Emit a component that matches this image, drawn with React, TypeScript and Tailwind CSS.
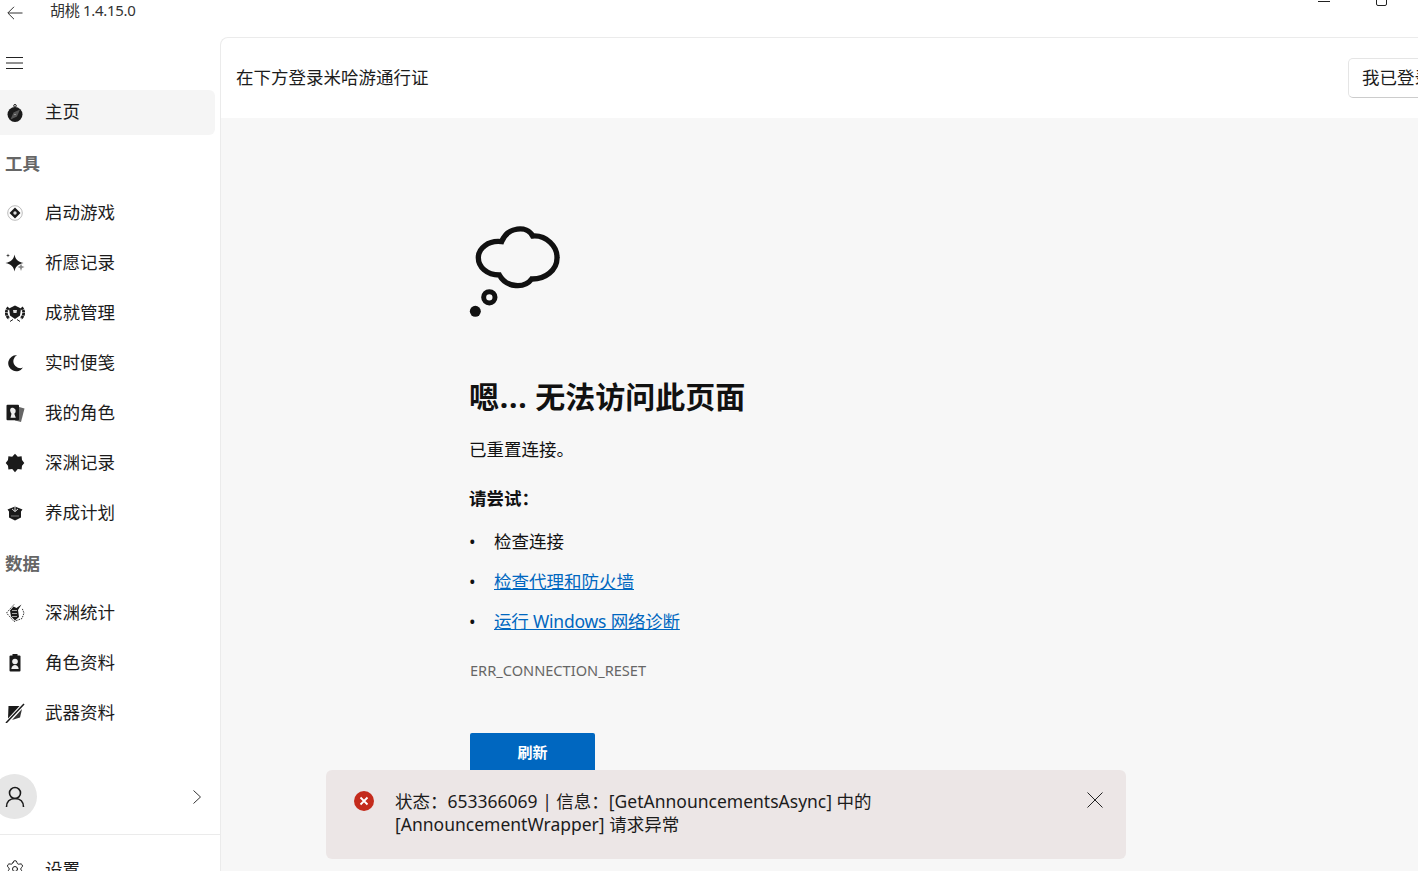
import type { ReactNode } from "react";
import { Settings } from "lucide-react";

const Compass = () => (
  <svg viewBox="0 0 20 20" className="w-5 h-5">
    <circle cx="10" cy="11.500" r="7.500" fill="#1a1a1a" />
    <path d="M15 6.500l-3 7-6.500 3 3-7z" fill="#555" />
    <path d="M10.500 11l-1 1" stroke="#ccc" strokeWidth="1" />
    <circle cx="10" cy="2.800" r="1.300" fill="none" stroke="#1a1a1a" strokeWidth="1" />
  </svg>
);

const Launch = () => (
  <svg viewBox="0 0 20 20" className="w-5 h-5">
    <circle cx="10" cy="10" r="7.300" fill="none" stroke="#bbb" strokeWidth="1" />
    <path d="M10 4.500l5.500 5.500-5.500 5.500L4.500 10z" fill="#1a1a1a" />
    <circle cx="10" cy="10" r="1.700" fill="#ddd" />
  </svg>
);

const Wish = () => (
  <svg viewBox="0 0 20 20" className="w-5 h-5">
    <path d="M16 10.500l1 2.500 2.500 1-2.500 1-1 3-1-3-2.500-1 2.500-1z" fill="#888" />
    <path d="M9.500 1.500c1 5 3 7 9 8.500-6 1.500-8 3.500-9 8.500-1-5-3-7-9-8.500 6-1.500 8-3.500 9-8.500z" fill="#1a1a1a" />
    <path d="M3 .5l.5 1.500L5 2.500l-1.500.5L3 4.500 2.500 3 1 2.500 2.500 2z" fill="#333" />
  </svg>
);

const Achievement = () => (
  <svg viewBox="0 0 20 20" className="w-5 h-5">
    <path d="M4 5.500L10 2.500l6 3-1 7-5 3.500-5-3.500z" fill="#1a1a1a" />
    <path d="M8 7h4l-.5 3h-3z" fill="#ddd" />
    <path d="M3.500 4.500C.5 8 .5 12 4 15.500M16.500 4.500c3 3.500 3 7.500-.5 11" fill="none" stroke="#1a1a1a" strokeWidth="2.800" strokeDasharray="2.600 .4" />
    <path d="M5 18.500l3-2M15 18.500l-3-2" stroke="#222" strokeWidth="1" />
  </svg>
);

const Moon = () => (
  <svg viewBox="0 0 20 20" className="w-5 h-5">
    <path d="M12 2.300A8 8 0 1 0 18 14.500 6.800 6.800 0 0 1 12 2.300z" fill="#1a1a1a" />
  </svg>
);

const Cards = () => (
  <svg viewBox="0 0 20 20" className="w-5 h-5">
    <path d="M12.500 3.500l7 2-3.500 13.500-6-1.500z" fill="#666" />
    <rect x="1.500" y="1.800" width="12.500" height="15.500" rx="1" fill="#1a1a1a" />
    <path d="M7 4.800c3 0 4.500 2.500 3.300 5l-1 1 1.500 4H5.500l1-4C4.800 8.500 4.500 5 7 4.800z" fill="#eee" />
  </svg>
);

const Abyss = () => (
  <svg viewBox="0 0 20 20" className="w-5 h-5">
    <path d="M10 .8l2.800 3 3.800-.6.400 3.800 2.300 3-2.300 2.700-.4 3.800-3.800-.6L10 19.200l-2.800-3.300-3.800.6-.4-3.800L.7 10l2.300-3 .4-3.800 3.800.6z" fill="#1a1a1a" />
  </svg>
);

const Cultivate = () => (
  <svg viewBox="0 0 20 20" className="w-5 h-5">
    <path d="M10 3.500l7.500 3-1.500 2v6l-6 3-6-3v-6l-1.500-2z" fill="#1a1a1a" />
    <path d="M10 2.500v6M7 6l3 2.500L13 6" fill="none" stroke="#ddd" strokeWidth="1" />
    <path d="M6 13h8" stroke="#777" strokeWidth="1" />
  </svg>
);

const AbyssStats = () => (
  <svg viewBox="0 0 20 20" className="w-5 h-5">
    <path d="M9 1.500L1.500 10 9 18.500l8-3 2-5.500-2-5" fill="none" stroke="#333" strokeWidth="1" strokeDasharray="1.500 1" />
    <path d="M16.500 1.500L13 7l1 7-4 3.500-4-4-1-6 3.500-4 3 1.500z" fill="#1a1a1a" />
    <path d="M7 7.500h5M7 10.500h5M7 13.500h5" stroke="#ccc" strokeWidth=".8" />
  </svg>
);

const Badge = () => (
  <svg viewBox="0 0 20 20" className="w-5 h-5">
    <rect x="4.500" y="2.500" width="11" height="16" rx="1" fill="#1a1a1a" />
    <rect x="7.500" y="1" width="5" height="2.500" fill="#1a1a1a" />
    <circle cx="10" cy="8.500" r="2.800" fill="#eee" />
    <path d="M6.300 16c.5-3 2-4 3.700-4s3.200 1 3.700 4z" fill="#eee" />
  </svg>
);

const Weapon = () => (
  <svg viewBox="0 0 20 20" className="w-5 h-5">
    <path d="M3.500 3h11L3 15.500z" fill="#1a1a1a" />
    <path d="M19 1L1 20" stroke="#1a1a1a" strokeWidth="1.500" />
    <path d="M17 6L7 17l8-2.500z" fill="#333" />
  </svg>
);

const NavItem = ({ icon, label }: { icon: ReactNode; label: string }) => (
  <div className="flex h-[50px] shrink-0 items-center gap-5 pl-[5px] text-[17.500px] text-[#1c1c1c]">
    {icon}
    <span className="pb-[2px]">{label}</span>
  </div>
);

const SectionLabel = ({ label }: { label: string }) => (
  <div className="flex h-[50px] shrink-0 items-center pl-[5px] text-[17.500px] font-bold text-[#666]">{label}</div>
);

const tools = [
  { icon: <Launch />, label: "启动游戏" },
  { icon: <Wish />, label: "祈愿记录" },
  { icon: <Achievement />, label: "成就管理" },
  { icon: <Moon />, label: "实时便笺" },
  { icon: <Cards />, label: "我的角色" },
  { icon: <Abyss />, label: "深渊记录" },
  { icon: <Cultivate />, label: "养成计划" },
];

const data = [
  { icon: <AbyssStats />, label: "深渊统计" },
  { icon: <Badge />, label: "角色资料" },
  { icon: <Weapon />, label: "武器资料" },
];

const Sidebar = () => (
  <aside className="flex w-[220px] shrink-0 flex-col">
    <div className="mt-px flex h-[50px] shrink-0 items-center pl-[5px]">
      <svg viewBox="0 0 20 14" className="h-[14px] w-5" fill="none" stroke="#222" strokeWidth="1">
        <path d="M1 1.500h17M1 7h17M1 12.500h17" />
      </svg>
    </div>
    <div className="mt-[2px] mr-[5px] flex h-[45px] shrink-0 items-center gap-5 rounded-r-md bg-[#f5f5f5] pl-[5px] text-[17.500px] text-[#1c1c1c]">
      <Compass />
      <span className="pb-[2px]">主页</span>
    </div>
    <div className="mt-[3px]">
      <SectionLabel label="工具" />
      {tools.map((t) => (
        <NavItem key={t.label} icon={t.icon} label={t.label} />
      ))}
      <SectionLabel label="数据" />
      {data.map((t) => (
        <NavItem key={t.label} icon={t.icon} label={t.label} />
      ))}
    </div>
    <div className="mt-9 flex h-[45px] shrink-0 items-center justify-between pr-[18px]">
      <div className="ml-[-8px] flex h-[45px] w-[45px] items-center justify-center rounded-full bg-[#e6e6e6]">
        <svg viewBox="0 0 24 24" className="h-6 w-6" fill="none" stroke="#1a1a1a" strokeWidth="1.600">
          <circle cx="12" cy="8" r="5.500" />
          <path d="M3.500 22c0-5 3-8.500 8.500-8.500s8.500 3.500 8.500 8.500" />
        </svg>
      </div>
      <svg viewBox="0 0 10 16" className="h-4 w-[10px]" fill="none" stroke="#333" strokeWidth="1">
        <path d="M1.500 1.500L8.500 8l-7 6.500" />
      </svg>
    </div>
    <div className="mt-[15px] flex h-[50px] shrink-0 items-center gap-5 border-t border-[#ebebeb] pl-[5px] pt-[19px] text-[17.500px] text-[#1c1c1c]">
      <Settings className="h-5 w-5" strokeWidth={1.200} />
      <span>设置</span>
    </div>
  </aside>
);

const ErrorPage = () => (
  <div className="flex flex-1 flex-col bg-[#f7f7f7] pl-[248px] pt-[107px] text-[#111]">
    <svg viewBox="60 45 270 270" className="ml-px h-[90px] w-[90px] overflow-visible">
      <path
        d="M155 95C172 50 232 45 248 78C290 75 322 110 321 143C322 180 285 208 245 207C225 235 170 235 148 195C110 195 85 170 85 143C85 115 115 90 155 95Z"
        fill="none"
        stroke="#111"
        strokeWidth="16"
      />
      <circle cx="118" cy="262" r="17" fill="none" stroke="#111" strokeWidth="15" />
      <circle cx="76" cy="304" r="16.500" fill="#111" />
    </svg>
    <h1 className="mt-[62px] text-[30px] font-bold leading-[40px]">
      <span className="tracking-[0.8px]">嗯...</span> 无法访问此页面
    </h1>
    <p className="mt-[20px] text-[17.500px] leading-6">已重置连接。</p>
    <p className="mt-[25px] text-[17.500px] font-bold leading-6">请尝试：</p>
    <ul className="mt-[19px] flex flex-col gap-4 text-[17.500px] leading-6">
      <li className="flex">
        <span className="w-[25px]">•</span>
        <span>检查连接</span>
      </li>
      <li className="flex">
        <span className="w-[25px]">•</span>
        <span className="text-[#0067c0] underline">检查代理和防火墙</span>
      </li>
      <li className="flex">
        <span className="w-[25px]">•</span>
        <span className="text-[#0067c0] underline tracking-[-0.2px]">运行 Windows 网络诊断</span>
      </li>
    </ul>
    <p className="ml-px mt-[27px] text-[14.600px] leading-5 text-[#666]">ERR_CONNECTION_RESET</p>
    <button className="ml-px mt-[53px] flex h-[50px] w-[125px] shrink-0 items-start justify-center rounded-[2px] bg-[#0067c0] pt-[8px] text-[15px] font-bold text-white">
      刷新
    </button>
  </div>
);

const Toast = () => (
  <div className="absolute left-[326px] top-[770px] flex h-[89px] w-[800px] items-start rounded-md bg-[#ece6e6] pl-[28px] pr-[23px] pt-[20px] text-[17.500px] leading-[23px] text-[#1c1c1c]">
    <svg viewBox="0 0 20 20" className="mt-px h-5 w-5 shrink-0">
      <circle cx="10" cy="10" r="10" fill="#c42b1c" />
      <path d="M6.500 6.500l7 7M13.500 6.500l-7 7" stroke="#fff" strokeWidth="1.800" />
    </svg>
    <p className="ml-[21px] w-[500px]">状态：653366069 | 信息：[GetAnnouncementsAsync] 中的 [AnnouncementWrapper] 请求异常</p>
    <svg viewBox="0 0 16 16" className="ml-auto mt-[2px] h-4 w-4 shrink-0" fill="none" stroke="#222" strokeWidth="1">
      <path d="M.5.500l15 15M15.500.500l-15 15" />
    </svg>
  </div>
);

export default function App() {
  return (
    <div
      className="relative flex h-[871px] w-[1418px] flex-col overflow-hidden bg-white"
      style={{ fontFamily: '"Noto Sans", "Noto Sans CJK SC", sans-serif' }}
    >
      <div className="flex h-[37px] shrink-0 items-start">
        <svg viewBox="0 0 16 14" className="ml-[7px] mt-[6px] h-[14px] w-4" fill="none" stroke="#333" strokeWidth="1">
          <path d="M15.500 7H1M7 .800L.8 7 7 13.200" />
        </svg>
        <span className="ml-[27px] text-[15px] leading-[20px] text-[#333] tracking-[-0.3px]">胡桃 1.4.15.0</span>
        <div className="ml-auto flex items-start">
          <div className="mr-[46px] mt-[1px] h-px w-3 bg-[#222]" />
          <div className="mr-[31px] mt-[-5px] h-[11px] w-[11px] rounded-[2px] border border-[#222]" />
        </div>
      </div>
      <div className="flex min-h-0 flex-1">
        <Sidebar />
        <main className="flex min-w-0 flex-1 flex-col overflow-hidden rounded-tl-lg border-l border-t border-[#ebebeb]">
          <header className="flex h-[80px] shrink-0 items-center pl-[15px] text-[17.500px] text-[#1c1c1c]">
            <span className="pb-[2px]">在下方登录米哈游通行证</span>
            <button className="ml-auto mr-[-70px] h-10 w-[140px] shrink-0 rounded-[5px] border border-[#e5e5e5] border-b-[#ccc] pb-[2px] pl-[13px] text-left text-[17.500px]">
              我已登录
            </button>
          </header>
          <ErrorPage />
        </main>
      </div>
      <Toast />
    </div>
  );
}
